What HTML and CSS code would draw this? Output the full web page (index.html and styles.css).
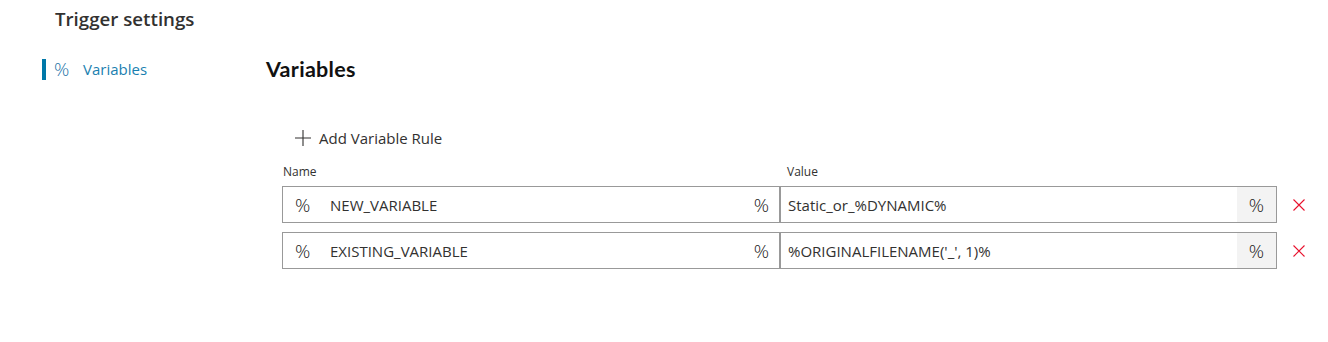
FILE: index.html
```html
<!DOCTYPE html>
<html>
<head>
<meta charset="utf-8">
<link rel="stylesheet" href="styles.css">
</head>
<body>
<div class="page">
  <h1 class="title">Trigger settings</h1>
  <div class="layout">
    <nav class="sidebar">
      <div class="nav-item active">
        <span class="nav-icon">%</span>
        <span class="nav-label">Variables</span>
      </div>
    </nav>
    <main class="content">
      <h2 class="section-title">Variables</h2>
      <button class="add-btn">
        <svg class="plus" width="16" height="16" viewBox="0 0 16 16"><path d="M8 0v16M0 8h16" stroke="#323130" stroke-width="1.1" fill="none"/></svg>
        <span>Add Variable Rule</span>
      </button>
      <div class="labels">
        <div class="label name-col">Name</div>
        <div class="label value-col">Value</div>
      </div>
      <div class="rows">
        <div class="row">
          <div class="field name-field">
            <span class="pct">%</span>
            <span class="val">NEW_VARIABLE</span>
            <span class="pct right">%</span>
          </div>
          <div class="field value-field">
            <span class="val">Static_or_%DYNAMIC%</span>
            <span class="pct-btn">%</span>
          </div>
          <svg class="del" width="12" height="12" viewBox="0 0 12 12"><path d="M0.5 0.5l11 11M11.5 0.5l-11 11" stroke="#e8112d" stroke-width="1.1" fill="none"/></svg>
        </div>
        <div class="row">
          <div class="field name-field">
            <span class="pct">%</span>
            <span class="val">EXISTING_VARIABLE</span>
            <span class="pct right">%</span>
          </div>
          <div class="field value-field">
            <span class="val">%ORIGINALFILENAME('_', 1)%</span>
            <span class="pct-btn">%</span>
          </div>
          <svg class="del" width="12" height="12" viewBox="0 0 12 12"><path d="M0.5 0.5l11 11M11.5 0.5l-11 11" stroke="#e8112d" stroke-width="1.1" fill="none"/></svg>
        </div>
      </div>
    </main>
  </div>
</div>
</body>
</html>
```
FILE: styles.css
```css
* { box-sizing: border-box; }
html, body { margin: 0; padding: 0; background: #fff; }
body {
  font-family: "Open Sans", "Noto Sans", sans-serif;
  color: #323130;
  width: 1328px;
  height: 342px;
  overflow: hidden;
}
.title {
  margin: 0;
  padding: 6px 0 0 55px;
  font-size: 18.7px;
  font-weight: 600;
  line-height: 26px;
  color: #323130;
}
.layout {
  display: flex;
  padding-top: 25px;
}
.sidebar {
  width: 266px;
  padding: 2px 0 0 42px;
}
.nav-item {
  display: flex;
  align-items: center;
  height: 21px;
  border-left: 4px solid #0078a8;
  padding-left: 8px;
  color: #1a7fb0;
}
.nav-icon {
  font-size: 19px;
  font-weight: 300;
  width: 29px;
  color: #1f74a8;
  line-height: 21px;
}
.nav-label {
  font-size: 15px;
  line-height: 21px;
}
.content {
  flex: 1;
}
.section-title {
  margin: 0;
  font-family: "Lato", sans-serif;
  font-weight: 700;
  font-size: 21.5px;
  line-height: 24px;
  color: #111;
  letter-spacing: 0.3px;
}
.add-btn {
  display: flex;
  align-items: center;
  gap: 8px;
  margin: 47px 0 0 29px;
  padding: 0;
  border: none;
  background: none;
  font-family: inherit;
  font-size: 15px;
  color: #323130;
  height: 20px;
}
.labels {
  display: flex;
  margin: 17px 0 0 16px;
  height: 14px;
}
.label {
  font-size: 12px;
  line-height: 14px;
  color: #323130;
}
.name-col { width: 505px; padding-left: 1px; }
.rows {
  display: flex;
  flex-direction: column;
  gap: 9px;
  margin: 7px 0 0 16px;
}
.row {
  display: flex;
  align-items: center;
}
.field {
  display: flex;
  align-items: center;
  height: 37px;
  border: 1px solid #999;
  font-size: 15px;
}
.name-field {
  width: 498px;
  padding: 0 10px 0 12px;
}
.value-field {
  width: 498px;
  border-left-width: 2px;
  margin-left: -1px;
  padding-left: 7px;
}
.pct {
  font-size: 19px;
  font-weight: 300;
  width: 35px;
  color: #1b1a19;
}
.pct.right {
  width: auto;
}
.val {
  flex: 1;
  color: #323130;
}
.pct-btn {
  width: 39px;
  height: 100%;
  background: #f3f3f3;
  display: flex;
  align-items: center;
  justify-content: center;
  font-size: 19px;
  font-weight: 300;
  color: #1b1a19;
}
.del {
  margin-left: 16px;
}
```
